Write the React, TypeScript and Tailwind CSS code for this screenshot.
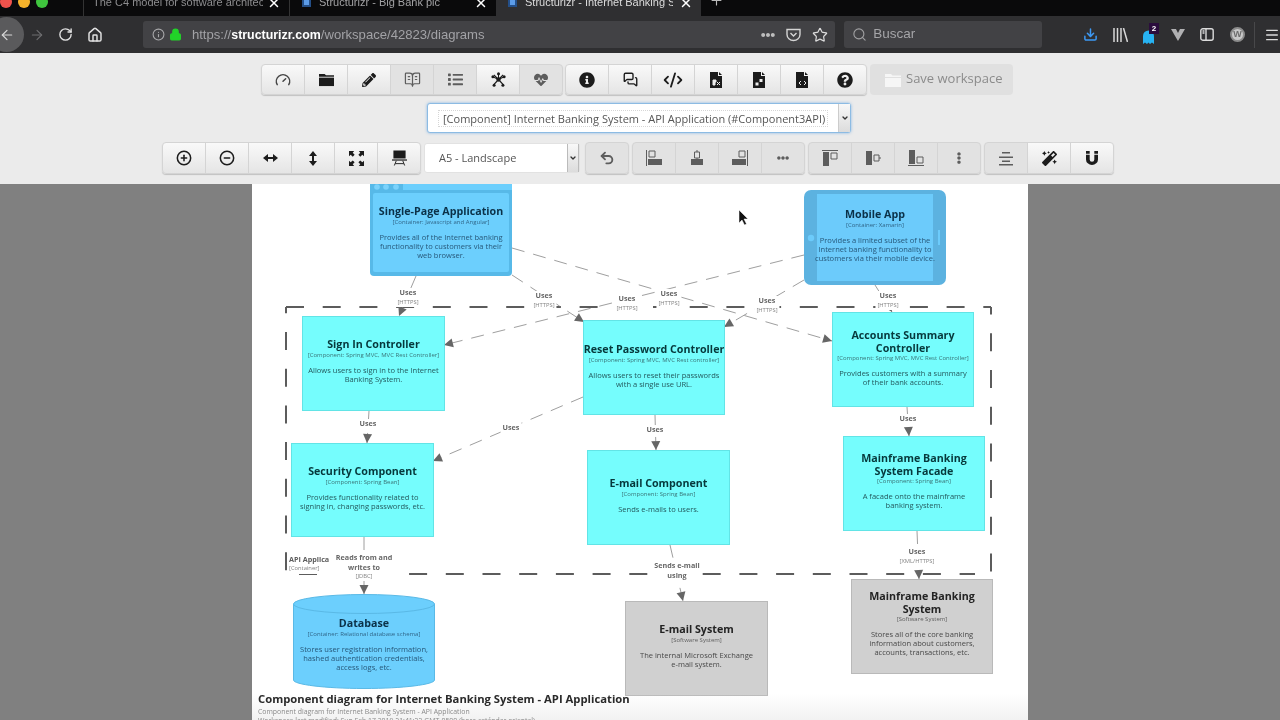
import React from "react";
import { FaPencilAlt, FaList, FaHeartbeat, FaInfoCircle, FaQuestionCircle, FaMagic, FaEllipsisH, FaEllipsisV } from "react-icons/fa";
import { Gauge, BookOpenText, MessagesSquare, CirclePlus, CircleMinus, Undo2, RotateCw, Home, ArrowLeft, ArrowRight, Info, Lock, Star, Search, Download, Menu, X, Plus, ChevronDown, CodeXml } from "lucide-react";

const S = ({ children, w = 16, h = 16, vb = "0 0 16 16" }: { children: React.ReactNode; w?: number; h?: number; vb?: string }) => (
  <svg width={w} height={h} viewBox={vb} fill="currentColor">{children}</svg>
);

const FolderI = () => <S w={17} h={15}><path d="M0 2h6l1.500 1.500H16V5H0z" /><path d="M0 6h16v9H0z" /></S>;
const NetI = () => (
  <S w={15} h={15}>
    <path d="M8 8 3 3M8 8l5-5M8 8l-5 5.500M8 8l5 5.500" stroke="currentColor" strokeWidth="1.300" />
    <circle cx="8" cy="8" r="2.300" /><circle cx="8" cy="1.800" r="1.600" /><circle cx="2" cy="5" r="1.600" /><circle cx="14" cy="5" r="1.600" /><circle cx="3.300" cy="14" r="1.600" /><circle cx="12.700" cy="14" r="1.600" />
    <path d="M8 8V2M8 8 2 5M8 8l6-3" stroke="currentColor" strokeWidth="1.100" />
  </S>
);
const ArrowsH = () => <S w={15} h={8} vb="0 0 15 8"><path d="M0 4l5-4v8zM15 4l-5-4v8z" /><path d="M4 3h7v2H4z" /></S>;
const ArrowsV = () => <S w={8} h={15} vb="0 0 8 15"><path d="M4 0l4 5H0zM4 15l-4-5h8z" /><path d="M3 4h2v7H3z" /></S>;
const FileI = ({ kind }: { kind: "p" | "s" | "c" }) => (
  <S w={13} h={16} vb="0 0 13 16">
    <path d="M0 0h8v4h4v12H0z" /><path d="M9 0l3 3H9z" />
    {kind === "p" && <path d="M3 8h3v2H5v3H3zM7 10l3 3M7 13l3-3" stroke="#eee" strokeWidth="1" fill="#eee" />}
    {kind === "s" && <path d="M2.500 10.500h3v3h-3zM6.500 7h3v3h-3z" fill="#eee" />}
    {kind === "c" && <path d="M5 9 3 11l2 2M8 9l2 2-2 2" stroke="#eee" strokeWidth="1" fill="none" />}
  </S>
);
const ExpandI = () => (
  <S w={15} h={15}>
    <path d="M0 0h5.500L4 1.800 6 4 4 6 1.800 4 0 5.500zM16 0v5.500L14.200 4 12 6l-2-2 2-2.200L10.500 0zM0 16v-5.500L1.800 12 4 10l2 2-2 2.200L5.500 16zM16 16h-5.500L12 14.200 10 12l2-2 2.200 2 1.800-1.500z" />
  </S>
);
const BoardI = () => (
  <S w={15} h={16}>
    <path d="M1.500 0h13v8.500h-13z" /><path d="M0 9.500h16v1.300H0z" />
    <path d="M4.500 11 2.500 16M11.500 11l2 5M3.500 14h9" stroke="currentColor" strokeWidth="1" />
  </S>
);
const A = ({ d }: { d: React.ReactNode }) => <S w={16} h={16}>{d}</S>;
const AL = () => <A d={<><path d="M0 0h1v16H0z" /><path d="M3 1h6v6H3z" fill="none" stroke="currentColor" /><path d="M2 9h14v6H2z" /></>} />;
const AC = () => <A d={<><path d="M8 0v9" stroke="currentColor" /><path d="M5.500 2h5v6h-5z" fill="#e3e3e3" stroke="currentColor" /><path d="M2 9h12v6H2z" /></>} />;
const AR = () => <A d={<><path d="M15 0h1v16h-1z" /><path d="M7 1h6v6H7z" fill="none" stroke="currentColor" /><path d="M0 9h14v6H0z" /></>} />;
const AT = () => <A d={<><path d="M0 0h16v1H0z" /><path d="M1 2h6v14H1z" /><path d="M9 3h6v6H9z" fill="none" stroke="currentColor" /></>} />;
const AM = () => <A d={<><path d="M1 1h6v14H1z" /><path d="M9 5h5v6H9z" fill="none" stroke="currentColor" /><path d="M14 8h2" stroke="currentColor" /></>} />;
const AB = () => <A d={<><path d="M0 15h16v1H0z" /><path d="M1 0h6v14H1z" /><path d="M9 7h6v6H9z" fill="none" stroke="currentColor" /></>} />;
const CenterI = () => <A d={<path d="M4 2h8v1.500H4zM1 6.500h14V8H1zM4 10.500h8V12H4zM1 14h14v1.500H1z" />} />;
const MagnetI = () => (
  <S w={12} h={14} vb="0 0 13 15"><path d="M0 0h4v3H0zM9 0h4v3H9zM0 4h4v5a2.500 2.500 0 0 0 5 0V4h4v5a6.500 6 0 0 1-13 0z" /></S>
);

type B = { i: React.ReactNode; off?: boolean };
const Group = ({ items, tall }: { items: B[]; tall?: boolean }) => (
  <div className="flex rounded-[4px] shadow-[0_1px_1px_rgba(0,0,0,0.18)]">
    {items.map((b, n) => (
      <div
        key={n}
        className={`w-[44px] ${tall ? "h-[32px]" : "h-[31px]"} flex items-center justify-center border border-[#d4d4d4] -ml-px first:ml-0 first:rounded-l-[4px] last:rounded-r-[4px] ${
          b.off ? "bg-[#e2e2e2] text-[#5d5d5d]" : "bg-gradient-to-b from-[#f9f9f9] to-[#e5e5e5] text-[#1c1c1c]"
        }`}
      >
        {b.i}
      </div>
    ))}
  </div>
);

type N = {
  x: number; y: number; w: number; h: number; ty: number; kind: "c" | "g" | "b" | "spa" | "mob" | "db";
  t: string[]; m: string; d: string[];
};
const nodes: N[] = [
  { x: 370, y: 178, w: 142, h: 98, ty: 205, kind: "spa", t: ["Single-Page Application"], m: "[Container: Javascript and Angular]", d: ["Provides all of the Internet banking", "functionality to customers via their", "web browser."] },
  { x: 804, y: 190, w: 142, h: 95, ty: 208, kind: "mob", t: ["Mobile App"], m: "[Container: Xamarin]", d: ["Provides a limited subset of the", "Internet banking functionality to", "customers via their mobile device."] },
  { x: 302, y: 316, w: 143, h: 95, ty: 337, kind: "c", t: ["Sign In Controller"], m: "[Component: Spring MVC, MVC Rest Controller]", d: ["Allows users to sign in to the Internet", "Banking System."] },
  { x: 583, y: 320, w: 142, h: 95, ty: 342, kind: "c", t: ["Reset Password Controller"], m: "[Component: Spring MVC, MVC Rest controller]", d: ["Allows users to reset their passwords", "with a single use URL."] },
  { x: 832, y: 312, w: 142, h: 95, ty: 328, kind: "c", t: ["Accounts Summary", "Controller"], m: "[Component: Spring MVC, MVC Rest Controller]", d: ["Provides customers with a summary", "of their bank accounts."] },
  { x: 291, y: 443, w: 143, h: 94, ty: 464, kind: "c", t: ["Security Component"], m: "[Component: Spring Bean]", d: ["Provides functionality related to", "signing in, changing passwords, etc."] },
  { x: 587, y: 450, w: 143, h: 95, ty: 476, kind: "c", t: ["E-mail Component"], m: "[Component: Spring Bean]", d: ["Sends e-mails to users."] },
  { x: 843, y: 436, w: 142, h: 95, ty: 451, kind: "c", t: ["Mainframe Banking", "System Facade"], m: "[Component: Spring Bean]", d: ["A facade onto the mainframe", "banking system."] },
  { x: 293, y: 594, w: 142, h: 95, ty: 617, kind: "db", t: ["Database"], m: "[Container: Relational database schema]", d: ["Stores user registration information,", "hashed authentication credentials,", "access logs, etc."] },
  { x: 625, y: 601, w: 143, h: 95, ty: 622, kind: "g", t: ["E-mail System"], m: "[Software System]", d: ["The internal Microsoft Exchange", "e-mail system."] },
  { x: 851, y: 579, w: 142, h: 95, ty: 589, kind: "g", t: ["Mainframe Banking", "System"], m: "[Software System]", d: ["Stores all of the core banking", "information about customers,", "accounts, transactions, etc."] },
];

const kindClass = (k: N["kind"]) =>
  k === "c" ? "bg-[#75fdfd] border border-[#62e4e6]" : k === "g" ? "bg-[#d0d0d0] border-[1.5px] border-[#b9b9b9]" : "";
const tc = (k: N["kind"]) => (k === "c" ? "text-[#06383b]" : k === "g" ? "text-[#232323]" : "text-[#0b3148]");
const mc = (k: N["kind"]) => (k === "c" ? "text-[#3a7578]" : k === "g" ? "text-[#5e5e5e]" : "text-[#31678a]");
const dc = (k: N["kind"]) => (k === "c" ? "text-[#245a5e]" : k === "g" ? "text-[#484848]" : "text-[#27587a]");

const Node = ({ n }: { n: N }) => (
  <div
    className={`absolute flex flex-col items-center overflow-hidden ${kindClass(n.kind)}`}
    style={{ left: n.x - 252, top: n.y - 184, width: n.w, height: n.h, paddingTop: n.ty - n.y }}
  >
    {n.kind === "spa" && (
      <svg className="absolute left-0 top-0" width={142} height={98} viewBox="0 0 142 98">
        <rect width="142" height="98" rx="4" fill="#57b9e8" />
        <rect x="33" y="6" width="109" height="6" fill="#6ccffd" />
        <circle cx="7" cy="9" r="2.800" fill="#7bd2fb" /><circle cx="16" cy="9" r="2.800" fill="#7bd2fb" /><circle cx="26" cy="9" r="2.800" fill="#7bd2fb" />
        <rect x="3" y="15" width="136" height="79" rx="2" fill="#6ccffd" />
      </svg>
    )}
    {n.kind === "mob" && (
      <svg className="absolute left-0 top-0" width={142} height={95} viewBox="0 0 142 95">
        <rect width="142" height="95" rx="7" fill="#5cb2e0" />
        <rect x="13" y="4" width="116" height="87" fill="#6ccbfb" />
        <circle cx="7" cy="48" r="3.200" fill="#6ccbfb" />
        <rect x="134" y="40" width="2" height="15" fill="#6ccbfb" />
      </svg>
    )}
    {n.kind === "db" && (
      <svg className="absolute left-0 top-0" width={142} height={95} viewBox="0 0 142 95">
        <path d="M.5 10v76c0 4.500 31 8.500 70.500 8.500s70.500-4 70.500-8.500V10z" fill="#6ccffd" stroke="#5ab9e6" />
        <ellipse cx="71" cy="10" rx="70.500" ry="9.500" fill="#6ccffd" stroke="#5ab9e6" />
      </svg>
    )}
    <div className="relative flex flex-col items-center whitespace-nowrap text-center font-['Open_Sans',sans-serif]">
      {n.t.map((l) => <div key={l} className={`text-[10.7px] leading-[12.5px] font-bold ${tc(n.kind)}`}>{l}</div>)}
      <div className={`text-[6px] leading-[8px] mb-[7px] ${mc(n.kind)}`}>{n.m}</div>
      {n.d.map((l) => <div key={l} className={`text-[7.55px] leading-[9px] ${dc(n.kind)}`}>{l}</div>)}
    </div>
  </div>
);

type L = { x: number; y: number; t: string[]; m?: string };
const labels: L[] = [
  { x: 408, y: 288, t: ["Uses"], m: "[HTTPS]" },
  { x: 544, y: 291, t: ["Uses"], m: "[HTTPS]" },
  { x: 627, y: 294, t: ["Uses"], m: "[HTTPS]" },
  { x: 669, y: 289, t: ["Uses"], m: "[HTTPS]" },
  { x: 767, y: 296, t: ["Uses"], m: "[HTTPS]" },
  { x: 888, y: 291, t: ["Uses"], m: "[HTTPS]" },
  { x: 368, y: 419, t: ["Uses"] },
  { x: 511, y: 423, t: ["Uses"] },
  { x: 655, y: 425, t: ["Uses"] },
  { x: 908, y: 414, t: ["Uses"] },
  { x: 917, y: 547, t: ["Uses"], m: "[XML/HTTPS]" },
  { x: 364, y: 553, t: ["Reads from and", "writes to"], m: "[JDBC]" },
  { x: 677, y: 561, t: ["Sends e-mail", "using"] },
];

const links: number[][] = [
  [416, 276, 399, 316], [512, 275, 584, 322], [512, 248, 832, 341], [804, 255, 444, 345], [804, 280, 724, 327], [875, 285, 892, 312],
  [369, 411, 367, 443], [583, 397, 433, 461], [655, 415, 656, 450], [907, 407, 909, 436], [917, 531, 919, 579], [364, 537, 364, 594], [670, 545, 683, 601],
];

const arrow = ([x1, y1, x2, y2]: number[]) => {
  const a = Math.atan2(y2 - y1, x2 - x1);
  const len = 9, hw = 4.500;
  const bx = x2 - len * Math.cos(a), by = y2 - len * Math.sin(a);
  const px = -Math.sin(a) * hw, py = Math.cos(a) * hw;
  return `${x2},${y2} ${bx + px},${by + py} ${bx - px},${by - py}`;
};

const Diagram = () => (
  <div className="relative w-[776px] h-[536px] bg-white overflow-hidden">
    <svg className="absolute left-0 top-0" width={776} height={536} viewBox="252 184 776 536" fill="none">
      <g stroke="#5c5c5c" strokeWidth="2" strokeDasharray="18 18.700">
        <path d="M286 307H991" />
        <path d="M991 307V574" strokeDashoffset="10.400" />
        <path d="M286 307V574" strokeDashoffset="11.700" />
        <path d="M286 574H975" strokeDashoffset="23.700" />
      </g>
      {links.map((l, i) => (
        <g key={i}>
          <path d={`M${l[0]} ${l[1]}L${l[2]} ${l[3]}`} stroke="#858585" strokeWidth="0.800" strokeDasharray="13 9" />
          <polygon points={arrow(l)} fill="#666" />
        </g>
      ))}
    </svg>
    {labels.map((l) => (
      <div
        key={`${l.x}-${l.y}`}
        className="absolute -translate-x-1/2 bg-white px-[2px] flex flex-col items-center whitespace-nowrap font-['Open_Sans',sans-serif]"
        style={{ left: l.x - 252, top: l.y - 184 }}
      >
        {l.t.map((t) => <div key={t} className="text-[7.2px] leading-[9.5px] font-bold text-[#666]">{t}</div>)}
        {l.m && <div className="text-[5.8px] leading-[9px] text-[#858585]">{l.m}</div>}
      </div>
    ))}
    <div className="absolute left-[36px] top-[369px] w-[44px] h-[21px] bg-white pl-[1px] overflow-hidden whitespace-nowrap font-['Open_Sans',sans-serif]">
      <div className="text-[7.2px] leading-[9px] mt-[2px] font-bold text-[#5c5c5c]">API Applica</div>
      <div className="text-[5.8px] leading-[8px] text-[#808080]">[Container]</div>
    </div>
    {nodes.map((n) => <Node key={n.t[0] + n.x} n={n} />)}
    <div className="absolute left-0 right-0 bottom-0 h-[26px] bg-gradient-to-b from-transparent to-[#f2f2f2]" />
    <div className="absolute left-[6px] top-[507px] whitespace-nowrap font-['Open_Sans',sans-serif]">
      <div className="text-[11.26px] leading-[15px] font-bold text-[#2a2a2a]">Component diagram for Internet Banking System - API Application</div>
      <div className="text-[6.9px] leading-[9px] mt-[1px] text-[#8a8a8a]">Component diagram for Internet Banking System - API Application</div>
      <div className="text-[6.9px] leading-[9px] text-[#8a8a8a]">Workspace last modified: Sun Feb 17 2019 21:41:22 GMT-0500 (hora estándar oriental)</div>
    </div>
    <svg className="absolute left-[486px] top-[25px]" width={10} height={17} viewBox="0 0 10 17">
      <path d="M1 1v13l3-3 2.500 5 2-1-2.500-5h4z" fill="#111" stroke="#fff" strokeWidth="0.500" />
    </svg>
  </div>
);

export default function App() {
  const font = "font-['Liberation_Sans',sans-serif]";
  return (
    <div className={`w-[1280px] h-[720px] overflow-hidden flex flex-col bg-[#808080] blur-[0.3px] ${font}`}>
      {/* tabs */}
      <div className="h-[16px] bg-[#0a0a0b] flex items-center shrink-0 overflow-hidden relative text-[11px]">
        <div className="w-[84px] h-full border-r border-[#333] flex items-start gap-[6px]">
          <span className="w-[12px] h-[12px] rounded-full bg-[#f0524c] -mt-[4px]" />
          <span className="w-[12px] h-[12px] rounded-full bg-[#f6b32b] -mt-[4px]" />
          <span className="w-[12px] h-[12px] rounded-full bg-[#3fc53e] -mt-[4px]" />
        </div>
        <div className="w-[206px] h-full border-r border-[#333] flex items-start pl-[9px] text-[#8d8d8f]">
          <span className="w-[170px] -mt-[5px] leading-[14px] overflow-hidden whitespace-nowrap">The C4 model for software architect</span>
          <X size={14} strokeWidth={2.5} className="text-white -mt-[4px] ml-[4px]" />
        </div>
        <div className="w-[206px] h-full flex items-start pl-[12px] text-[#a2a2a4]">
          <span className="w-[9px] h-[9px] -mt-[2px] bg-[#5c9ce8] border-[2px] border-[#244f88] shrink-0" />
          <span className="w-[155px] ml-[8px] -mt-[5px] leading-[14px] overflow-hidden whitespace-nowrap">Structurizr - Big Bank pic</span>
          <X size={14} strokeWidth={2.5} className="text-white -mt-[4px]" />
        </div>
        <div className="w-[205px] h-full bg-[#2f2f31] flex items-start pl-[12px] text-[#dcdcdc]">
          <span className="w-[9px] h-[9px] -mt-[2px] bg-[#5c9ce8] border-[2px] border-[#244f88] shrink-0" />
          <span className="w-[148px] ml-[8px] -mt-[5px] leading-[14px] overflow-hidden whitespace-nowrap">Structurizr - Internet Banking S</span>
          <X size={14} strokeWidth={2.5} className="text-white -mt-[4px] ml-[6px]" />
        </div>
        <Plus size={15} strokeWidth={1.8} className="text-[#bbb] ml-[8px] -mt-[16px]" />
      </div>
      {/* nav */}
      <div className="h-[37px] bg-[#2f2f31] flex items-center shrink-0 relative">
        <div className="w-[35px] h-[35px] -ml-[11px] rounded-full bg-[#5a5a5c] flex items-center justify-end pr-[9px] shrink-0">
          <ArrowLeft size={16} className="text-[#d8d8d8]" strokeWidth={1.8} />
        </div>
        <ArrowRight size={16} className="text-[#6f6f71] ml-[5px]" strokeWidth={1.6} />
        <RotateCw size={15} className="text-[#e2e2e2] ml-[13px]" strokeWidth={2.2} />
        <Home size={16} className="text-[#e2e2e2] ml-[14px]" strokeWidth={2.2} />
        <div className="ml-[40px] w-[693px] h-[27px] rounded-[3px] bg-[#424245] flex items-center pl-[9px] pr-[7px] ">
          <Info size={13} className="text-[#a8a8aa]" />
          <Lock size={13} className="text-[#22d329] ml-[4px]" fill="#22d329" strokeWidth={2.2} />
          <span className="ml-[10px] text-[13.1px] text-[#a2a2a6] whitespace-nowrap">
            https://<span className="text-white font-bold text-[12.4px]">structurizr.com</span>/workspace/42823/diagrams
          </span>
          <div className="ml-auto flex items-center gap-[11px] text-[#cfcfcf]">
            <FaEllipsisH size={14} className="text-[#bdbdbd]" />
            <svg width={15} height={14} viewBox="0 0 15 14" fill="none" stroke="#d4d4d4" strokeWidth="1.4"><path d="M1 1.500h13v5a6.500 6 0 0 1-13 0z" /><path d="M4.500 5l3 3 3-3" /></svg>
            <Star size={16} strokeWidth={1.8} className="text-[#dcdcdc]" />
          </div>
        </div>
        <div className="ml-[9px] w-[198px] h-[27px] rounded-[3px] bg-[#424245] flex items-center pl-[8px]">
          <Search size={15} className="text-[#a0a0a2]" strokeWidth={1.8} />
          <span className="ml-[6px] text-[13.5px] text-[#a5a5a8]">Buscar</span>
        </div>
        <Download size={15} className="text-[#3d9af5] ml-[41px]" strokeWidth={2.4} />
        <svg className="ml-[15px]" width={15} height={14} viewBox="0 0 15 14" stroke="#d8d8d8" strokeWidth="1.5" fill="none"><path d="M1 0v14M4.500 0v14M8 0v14M10.500 0l4 14" /></svg>
        <div className="relative ml-[14px] w-[15px] h-[18px] flex items-end">
          <svg width={13} height={14} viewBox="0 0 13 14"><path d="M1 14V6a5.500 5.500 0 0 1 11 0v8l-2-1.500-2 1.500-1.500-1.500L5 14l-2-1.500z" fill="#27b3f2" /></svg>
          <span className="absolute -right-[2px] -top-[3px] w-[10px] h-[11px] bg-[#2b0d3d] text-white text-[8px] leading-[11px] font-bold text-center">2</span>
        </div>
        <svg className="ml-[14px]" width={14} height={12} viewBox="0 0 14 12"><path d="M0 0h5l2 4 2-4h5L7 12z" fill="#b0b0b2" /></svg>
        <svg className="ml-[15px]" width={14} height={13} viewBox="0 0 14 13" fill="none" stroke="#dcdcdc" strokeWidth="1.4"><rect x=".8" y=".8" width="12.4" height="11.4" rx="2" /><path d="M6 1v11" /><path d="M2.500 3h2M2.500 5h2" /></svg>
        <span className="ml-[16px] w-[15px] h-[15px] rounded-full bg-[#c9c9c9] border-[2px] border-[#8c8c8c] text-[#6c6c6c] text-[9px] leading-[11px] font-bold text-center">W</span>
        <span className="ml-[9px] w-px h-[26px] bg-[#48484a]" />
        <Menu size={16} className="text-[#dcdcdc] ml-[9px]" strokeWidth={2} />
      </div>
      {/* toolbars */}
      <div className="h-[131px] shrink-0 bg-[#ebebeb] flex flex-col items-center pt-[11px] font-['Open_Sans',sans-serif] relative">
        <div className="flex items-center self-start ml-[261px]">
          <Group items={[
            { i: <Gauge size={16} strokeWidth={2.2} className="text-[#444]" /> },
            { i: <FolderI /> },
            { i: <FaPencilAlt size={14} /> },
            { i: <BookOpenText size={17} strokeWidth={1.7} />, off: true },
            { i: <FaList size={15} />, off: true },
            { i: <NetI /> },
            { i: <FaHeartbeat size={14} />, off: true },
          ]} />
          <div className="ml-[2px]">
            <Group items={[
              { i: <FaInfoCircle size={16} /> },
              { i: <MessagesSquare size={15} strokeWidth={2.2} /> },
              { i: <CodeXml size={20} strokeWidth={2.2} /> },
              { i: <FileI kind="p" /> },
              { i: <FileI kind="s" /> },
              { i: <FileI kind="c" /> },
              { i: <FaQuestionCircle size={16} /> },
            ]} />
          </div>
          <div className="ml-[3px] w-[143px] h-[31px] rounded-[4px] bg-[#e0e0e0] flex items-center pl-[15px] text-[#8b8b8b]">
            <svg width={16} height={14} viewBox="0 0 16 14" fill="#f6f6f6"><path d="M0 1h6l1.500 1.500H16V4H0zM0 5h16v9H0z" /></svg>
            <span className="ml-[5px] -mt-[2px] text-[13px] leading-none whitespace-nowrap">Save workspace</span>
          </div>
        </div>
        <div className="mt-[8px] self-start ml-[427px] w-[424px] h-[30px] bg-white rounded-[3px] border border-[#8cbbe3] shadow-[0_0_3px_rgba(90,160,225,0.7)] flex items-center pl-[10px]">
          <div className="w-[390px] h-[17px] border border-dotted border-[#d6d6d6] pl-[4px] text-[11px] leading-[15px] text-[#555] whitespace-nowrap overflow-hidden">
            [Component] Internet Banking System - API Application (#Component3API)
          </div>
          <div className="ml-auto w-[12px] h-full bg-gradient-to-b from-[#f8f8f8] to-[#dcdcdc] border-l border-[#ccc] flex items-center justify-center">
            <ChevronDown size={8} strokeWidth={4} className="text-[#333]" />
          </div>
        </div>
        <div className="mt-[9px] flex items-center self-start ml-[162px]">
          <Group tall items={[
            { i: <CirclePlus size={16} strokeWidth={2.3} /> },
            { i: <CircleMinus size={16} strokeWidth={2.3} /> },
            { i: <ArrowsH /> },
            { i: <ArrowsV /> },
            { i: <ExpandI /> },
            { i: <BoardI /> },
          ]} />
          <div className="ml-[3px] w-[156px] h-[30px] bg-white rounded-[3px] border border-[#e2e2e2] flex items-center pl-[14px] text-[11px] text-[#555]">
            A5 - Landscape
            <div className="ml-auto w-[12px] h-full bg-gradient-to-b from-[#f8f8f8] to-[#dcdcdc] border-l border-r border-[#bbb] flex items-center justify-center">
              <ChevronDown size={8} strokeWidth={4} className="text-[#333]" />
            </div>
          </div>
          <div className="ml-[5px]"><Group tall items={[{ i: <Undo2 size={16} strokeWidth={2.8} />, off: true }]} /></div>
          <div className="ml-[3px]"><Group tall items={[
            { i: <AL />, off: true }, { i: <AC />, off: true }, { i: <AR />, off: true }, { i: <FaEllipsisH size={12} />, off: true },
          ]} /></div>
          <div className="ml-[3px]"><Group tall items={[
            { i: <AT />, off: true }, { i: <AM />, off: true }, { i: <AB />, off: true }, { i: <FaEllipsisV size={12} />, off: true },
          ]} /></div>
          <div className="ml-[3px]"><Group tall items={[
            { i: <CenterI />, off: true }, { i: <FaMagic size={15} /> }, { i: <MagnetI /> },
          ]} /></div>
        </div>
      </div>
      {/* canvas */}
      <div className="flex-1 pl-[252px]">
        <Diagram />
      </div>
    </div>
  );
}
